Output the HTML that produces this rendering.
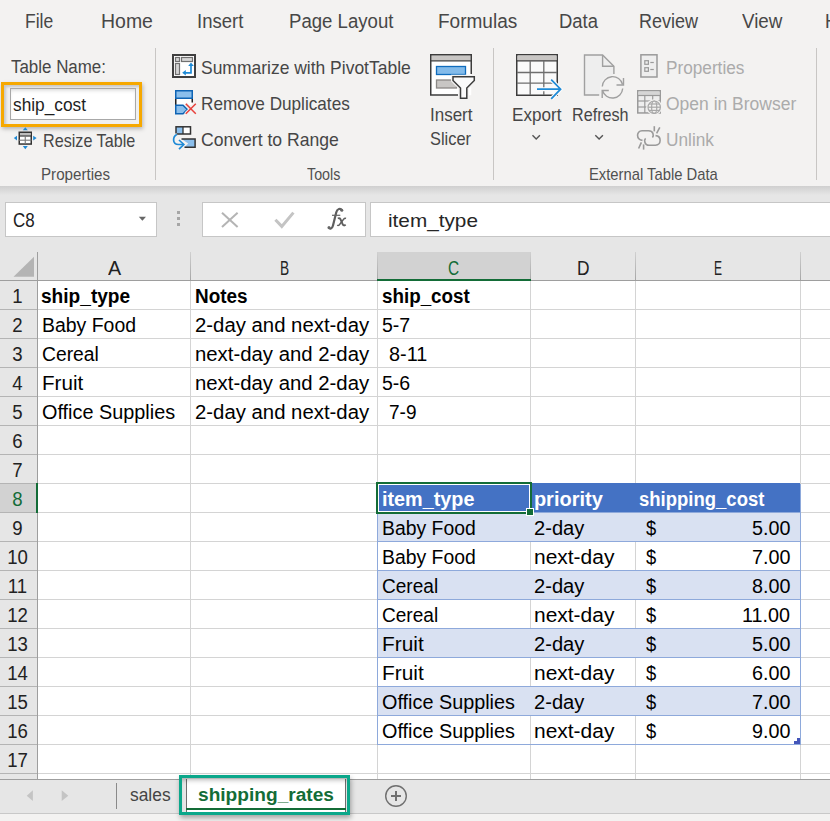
<!DOCTYPE html><html><head><meta charset="utf-8"><style>
html,body{margin:0;padding:0;width:830px;height:821px;overflow:hidden;background:#f3f2f1}
body{position:relative;font-family:"Liberation Sans",sans-serif}
.t{position:absolute;white-space:nowrap;line-height:1;transform-origin:0 0}
</style></head><body>
<div style="position:absolute;left:0px;top:0px;width:830px;height:186px;background:#f3f2f1"></div>
<div style="position:absolute;left:0px;top:186px;width:830px;height:594px;background:#e6e6e6"></div>
<div style="position:absolute;left:0px;top:186px;width:830px;height:9px;background:linear-gradient(#cfcfcf,#e6e6e6)"></div>
<div class="t" style="left:24.60px;top:11.00px;font-size:20px;color:#474747;transform:scaleX(0.8758);">File</div>
<div class="t" style="left:100.50px;top:11.00px;font-size:20px;color:#474747;transform:scaleX(0.9738);">Home</div>
<div class="t" style="left:196.70px;top:11.00px;font-size:20px;color:#474747;transform:scaleX(0.9260);">Insert</div>
<div class="t" style="left:288.60px;top:11.00px;font-size:20px;color:#474747;transform:scaleX(0.9297);">Page Layout</div>
<div class="t" style="left:437.70px;top:11.00px;font-size:20px;color:#474747;transform:scaleX(0.9508);">Formulas</div>
<div class="t" style="left:559.00px;top:11.00px;font-size:20px;color:#474747;transform:scaleX(0.9220);">Data</div>
<div class="t" style="left:639.40px;top:11.00px;font-size:20px;color:#474747;transform:scaleX(0.8994);">Review</div>
<div class="t" style="left:741.60px;top:11.00px;font-size:20px;color:#474747;transform:scaleX(0.9395);">View</div>
<div class="t" style="left:825.00px;top:11.00px;font-size:20px;color:#474747;transform:scaleX(0.9000);">H</div>
<div style="position:absolute;left:155px;top:48px;width:1px;height:132px;background:#c8c6c4"></div>
<div style="position:absolute;left:493px;top:48px;width:1px;height:132px;background:#c8c6c4"></div>
<div style="position:absolute;left:816px;top:48px;width:1px;height:132px;background:#c8c6c4"></div>
<div class="t" style="left:10.50px;top:58.00px;font-size:18.8px;color:#464646;transform:scaleX(0.9009);">Table Name:</div>
<div style="position:absolute;left:1px;top:82px;width:141px;height:45px;border:3px solid #f6a800;box-sizing:border-box;box-shadow:1px 2px 4px rgba(0,0,0,0.25)"></div>
<div style="position:absolute;left:4px;top:85px;width:135px;height:39px;background:#f0f0f0;box-shadow:inset 2px 2px 3px rgba(0,0,0,0.18)"></div>
<div style="position:absolute;left:10px;top:88px;width:126px;height:32px;background:#fff;border:1px solid #a8a8a8;box-sizing:border-box;box-shadow:inset 0 3px 4px -2px rgba(0,0,0,0.18)"></div>
<div class="t" style="left:13.00px;top:96.00px;font-size:18.5px;color:#1e1e1e;transform:scaleX(0.9340);">ship_cost</div>
<div class="t" style="left:42.80px;top:132.00px;font-size:18.6px;color:#464646;transform:scaleX(0.8689);">Resize Table</div>
<div class="t" style="left:40.90px;top:166.00px;font-size:16.2px;color:#505050;transform:scaleX(0.9368);">Properties</div>
<div class="t" style="left:200.80px;top:59.00px;font-size:18.6px;color:#464646;transform:scaleX(0.9396);">Summarize with PivotTable</div>
<div class="t" style="left:200.80px;top:95.00px;font-size:18.6px;color:#464646;transform:scaleX(0.9227);">Remove Duplicates</div>
<div class="t" style="left:200.80px;top:131.00px;font-size:18.6px;color:#464646;transform:scaleX(0.9450);">Convert to Range</div>
<div class="t" style="left:306.60px;top:166.00px;font-size:16.2px;color:#505050;transform:scaleX(0.8830);">Tools</div>
<div class="t" style="left:430.00px;top:107.00px;font-size:17.9px;color:#464646;transform:scaleX(0.9497);">Insert</div>
<div class="t" style="left:430.00px;top:131.00px;font-size:17.9px;color:#464646;transform:scaleX(0.9162);">Slicer</div>
<div class="t" style="left:512.00px;top:107.00px;font-size:17.9px;color:#464646;transform:scaleX(0.9549);">Export</div>
<div class="t" style="left:571.70px;top:107.00px;font-size:17.9px;color:#464646;transform:scaleX(0.9034);">Refresh</div>
<div class="t" style="left:665.50px;top:59.00px;font-size:18.3px;color:#ababab;transform:scaleX(0.9407);">Properties</div>
<div class="t" style="left:665.50px;top:95.00px;font-size:18.3px;color:#ababab;transform:scaleX(0.9565);">Open in Browser</div>
<div class="t" style="left:665.50px;top:131.00px;font-size:18.3px;color:#ababab;transform:scaleX(0.9438);">Unlink</div>
<div class="t" style="left:589.00px;top:166.00px;font-size:16.2px;color:#505050;transform:scaleX(0.9137);">External Table Data</div>
<div style="position:absolute;left:5px;top:202px;width:152px;height:35px;background:#fff;border:1px solid #c6c6c6;box-sizing:border-box"></div>
<div class="t" style="left:12.70px;top:211.00px;font-size:19.5px;color:#222;transform:scaleX(0.8694);">C8</div>
<div style="position:absolute;left:202px;top:202px;width:164px;height:35px;background:#fff;border:1px solid #c6c6c6;box-sizing:border-box"></div>
<div style="position:absolute;left:370px;top:202px;width:470px;height:35px;background:#fff;border:1px solid #c6c6c6;box-sizing:border-box"></div>
<div class="t" style="left:388.20px;top:212.00px;font-size:18.5px;color:#262626;transform:scaleX(1.1210);">item_type</div>

<svg style="position:absolute;left:0;top:0" width="830" height="250">
<!-- pivot -->
<rect x="173" y="55" width="22" height="22" fill="#fff" stroke="#3f3f3f" stroke-width="2"/>
<g fill="#d6d6d6" stroke="#707070" stroke-width="1.2">
<rect x="175.5" y="57.5" width="4" height="4"/><rect x="181.5" y="57.5" width="11" height="4"/><rect x="175.5" y="63.5" width="4" height="11"/>
</g>
<path d="M184.5 72.8 H191 V65" fill="none" stroke="#1e8ad6" stroke-width="1.7"/>
<polygon points="182.2,72.8 185.8,70 185.8,75.6" fill="#1e8ad6"/>
<polygon points="191,62.4 188.2,66 193.8,66" fill="#1e8ad6"/>
<!-- remove duplicates -->
<rect x="175.75" y="98.5" width="16.5" height="6.5" fill="#fff"/>
<line x1="175.75" y1="98" x2="175.75" y2="105" stroke="#222" stroke-width="1.5"/>
<line x1="192.25" y1="98" x2="192.25" y2="102.5" stroke="#222" stroke-width="1.5"/>
<rect x="175.75" y="90.75" width="16.5" height="7.5" fill="#8bbfec" stroke="#0f64b4" stroke-width="1.5"/>
<polygon points="175.75,105.25 183,105.25 187.3,109.5 183,113.75 175.75,113.75" fill="#8bbfec" stroke="#0f64b4" stroke-width="1.5"/>
<g stroke="#f3f2f1" stroke-width="3.5"><line x1="185.8" y1="103.8" x2="195.8" y2="113.8"/><line x1="195.8" y1="103.8" x2="185.8" y2="113.8"/></g>
<g stroke="#e8413c" stroke-width="1.5"><line x1="185.8" y1="103.8" x2="195.8" y2="113.8"/><line x1="195.8" y1="103.8" x2="185.8" y2="113.8"/></g>
<!-- convert to range -->
<rect x="176" y="126.8" width="7" height="7.2" fill="#8bbfec"/>
<rect x="183" y="126.8" width="7.5" height="7.2" fill="#fff"/>
<rect x="176" y="126.8" width="14.5" height="7.2" fill="none" stroke="#333" stroke-width="1.5"/>
<line x1="183" y1="126.8" x2="183" y2="134" stroke="#333" stroke-width="1.3"/>
<polygon points="181.5,138.9 195.1,138.9 195.1,147.2 184.5,147.2 188.2,143.5" fill="#8bbfec"/>
<path d="M181.5 138.9 H195.1 V147.2 H184.5" fill="none" stroke="#333" stroke-width="1.5"/>
<path d="M177 134.5 C172.5 136.5 172 144.5 178.5 144.5 H183.5" fill="none" stroke="#f3f2f1" stroke-width="3.5"/>
<path d="M177 134.5 C172.5 136.5 172 144.5 178.5 144.5 H183.5" fill="none" stroke="#1e8ad6" stroke-width="1.7"/>
<polyline points="179,140 183.8,144.5 179,149.2" fill="none" stroke="#1e8ad6" stroke-width="1.7"/>
<!-- resize table -->
<rect x="19.25" y="132.25" width="12" height="11.8" fill="#fff" stroke="#333" stroke-width="1.5"/>
<rect x="20" y="133" width="10.5" height="2.6" fill="#bdbdbd"/>
<line x1="19" y1="136" x2="31.5" y2="136" stroke="#333" stroke-width="1.2"/>
<line x1="19" y1="140.2" x2="31.5" y2="140.2" stroke="#777" stroke-width="1.1"/>
<line x1="25.25" y1="136" x2="25.25" y2="144" stroke="#777" stroke-width="1.1"/>
<g fill="#1e88d4"><polygon points="22.8,130.2 27.8,130.2 25.3,127.2"/><polygon points="17,135.7 17,140.5 13.8,138.1"/><polygon points="33.2,135.7 33.2,140.5 36.6,138.1"/><polygon points="22.8,146 27.8,146 25.3,149.2"/></g>
<!-- slicer -->
<rect x="430.75" y="54.75" width="40.5" height="40.5" fill="#fff"/>
<rect x="431.5" y="55.5" width="39" height="5" fill="#c8c6c4"/>
<path d="M458 95 H430.75 V54.75 H471.25 V74" fill="none" stroke="#3c3c3c" stroke-width="1.5"/>
<line x1="430.75" y1="60.8" x2="471.25" y2="60.8" stroke="#3c3c3c" stroke-width="1.3"/>
<rect x="436.5" y="66.5" width="29" height="8" fill="#83bbea" stroke="#0f6cbd" stroke-width="1.3"/>
<rect x="436.5" y="80" width="20" height="8" fill="#c8c6c4" stroke="#8a8886" stroke-width="1.3"/>
<polygon points="453,76.8 474.3,76.8 474.3,80.5 466.8,88 466.8,98.3 460.5,98.3 460.5,88 453,80.5" fill="#fafafa" stroke="#f3f2f1" stroke-width="4"/>
<polygon points="453,76.8 474.3,76.8 474.3,80.5 466.8,88 466.8,98.3 460.5,98.3 460.5,88 453,80.5" fill="#fafafa" stroke="#3c3c3c" stroke-width="1.5"/>
<!-- export -->
<rect x="516.75" y="54.75" width="40.5" height="40.5" fill="#fafafa" stroke="#3c3c3c" stroke-width="1.5"/>
<rect x="517.5" y="55.5" width="39" height="5" fill="#c8c6c4"/>
<line x1="516.75" y1="60.8" x2="557.25" y2="60.8" stroke="#3c3c3c" stroke-width="1.3"/>
<g stroke="#6e6e6e" stroke-width="1.3"><line x1="530.2" y1="61" x2="530.2" y2="95"/><line x1="543.8" y1="61" x2="543.8" y2="95"/><line x1="517" y1="72.5" x2="557" y2="72.5"/><line x1="517" y1="83.2" x2="557" y2="83.2"/></g>
<path d="M537 89.2 H559.5 M551.2 79.6 L560.6 89.2 L551.2 98.8" fill="none" stroke="#fafafa" stroke-width="4"/>
<path d="M537 89.2 H559.5 M551.2 79.6 L560.6 89.2 L551.2 98.8" fill="none" stroke="#1e8ad6" stroke-width="1.7"/>
<polyline points="532.5,135.2 536.2,139 539.9,135.2" fill="none" stroke="#555" stroke-width="1.4"/>
<!-- refresh -->
<path d="M599.2 95 H584.5 V55 H602.6 L613.9 66.3 V73.9" fill="#eeeeee" stroke="#a0a0a0" stroke-width="1.4"/>
<path d="M602.6 55 V66.3 H613.9" fill="none" stroke="#a0a0a0" stroke-width="1.4"/>
<circle cx="612.5" cy="87.5" r="12.5" fill="#f3f2f1"/>
<path d="M602.3 86.5 A10.3 10.3 0 0 1 622.6 84.5" fill="none" stroke="#a0a0a0" stroke-width="1.4"/>
<path d="M622.7 88.5 A10.3 10.3 0 0 1 602.5 90.5" fill="none" stroke="#a0a0a0" stroke-width="1.4"/>
<path d="M623.5 78 V85 H616.5" fill="none" stroke="#a0a0a0" stroke-width="1.4"/>
<path d="M602.2 98 V90.5 H608.8" fill="none" stroke="#a0a0a0" stroke-width="1.4"/>
<polyline points="595.3,135.2 599.1,139 602.9,135.2" fill="none" stroke="#555" stroke-width="1.4"/>
<!-- properties disabled -->
<rect x="640.9" y="54.8" width="16.1" height="22.2" fill="#eeeeee" stroke="#9a9a9a" stroke-width="1.5"/>
<g stroke="#9a9a9a" stroke-width="1.2" fill="none"><rect x="644.8" y="60.7" width="3.6" height="3.6"/><rect x="644.8" y="67.7" width="3.6" height="3.6"/><line x1="650.3" y1="62.5" x2="653.8" y2="62.5"/><line x1="650.3" y1="69.5" x2="653.8" y2="69.5"/></g>
<!-- open in browser -->
<rect x="637.75" y="90.75" width="22.5" height="22.2" fill="#eeeeee" stroke="#9a9a9a" stroke-width="1.5"/>
<rect x="638.5" y="91.5" width="21" height="3.8" fill="#d6d6d6"/>
<g stroke="#9a9a9a" stroke-width="1.2"><line x1="637.75" y1="95.5" x2="660.25" y2="95.5"/><line x1="644.8" y1="95.5" x2="644.8" y2="113"/><line x1="652.7" y1="95.5" x2="652.7" y2="113"/><line x1="637.75" y1="101" x2="660.25" y2="101"/><line x1="637.75" y1="107" x2="660.25" y2="107"/></g>
<circle cx="654.2" cy="107.2" r="8" fill="#f3f2f1"/>
<g stroke="#a8a8a8" stroke-width="1.2" fill="none"><circle cx="654.2" cy="107.2" r="6.2"/><ellipse cx="654.2" cy="107.2" rx="2.6" ry="6.2"/><line x1="648" y1="107.2" x2="660.4" y2="107.2"/><line x1="649" y1="104" x2="659.4" y2="104"/><line x1="649" y1="110.4" x2="659.4" y2="110.4"/></g>
<!-- unlink -->
<g stroke="#9a9a9a" stroke-width="1.6" fill="none">
<path d="M642.5 140.4 C636 139.5 636 130.8 642 130.8 H648.5 C653.5 130.8 654 135.5 652.4 137.4"/>
<path d="M645.6 138.3 C643.8 140 644.5 145.2 649 145.2 H655.5 C661.5 145.2 661.8 136 655.5 135.6"/>
<line x1="654.3" y1="126.2" x2="654.3" y2="131.4"/><line x1="659.8" y1="127.4" x2="656.6" y2="133.4"/><line x1="641.4" y1="142.4" x2="638.6" y2="148.5"/><line x1="643.6" y1="144.4" x2="643.6" y2="149.6"/>
</g>
<!-- formula bar -->
<polygon points="138.8,216.8 146,216.8 142.4,220.8" fill="#666"/>
<g fill="#a6a6a6"><rect x="177" y="211" width="3" height="3"/><rect x="177" y="217" width="3" height="3"/><rect x="177" y="223" width="3" height="3"/></g>
<g stroke="#b4b4b4" stroke-width="2"><line x1="222" y1="212.8" x2="237.6" y2="227"/><line x1="237.6" y1="212.8" x2="222" y2="227"/></g>
<polyline points="275.4,219.8 281.8,226.4 293.4,212.6" fill="none" stroke="#c4c4c4" stroke-width="3"/>
</svg>

<svg style="position:absolute;left:0;top:200px" width="360" height="40"><g transform="translate(0,-200)">
<path d="M342 210.2 C340.5 208 337.2 208.6 336.3 212.3 L333 225.5 C332.2 228.8 329.8 229.3 328.6 227.6" fill="none" stroke="#5e5e5e" stroke-width="2.2"/>
<circle cx="341.8" cy="210.3" r="1.5" fill="#666"/><circle cx="329" cy="227.4" r="1.5" fill="#666"/>
<line x1="332" y1="215.3" x2="340.3" y2="215.3" stroke="#666" stroke-width="1.2"/>
<path d="M337.8 218.5 C339.5 217.6 340.3 218.5 341 220.3 L342.6 224.2 C343.2 225.6 344.3 225.8 345.7 224.8" fill="none" stroke="#5e5e5e" stroke-width="1.9"/>
<path d="M346 218.5 C345 218 344.3 218.4 343.6 219.3 L339.6 224.5 C339 225.4 338 225.8 337.3 225" fill="none" stroke="#5e5e5e" stroke-width="1.4"/>
</g></svg>
<div style="position:absolute;left:38px;top:281px;width:792px;height:498px;background:#fff"></div>
<div style="position:absolute;left:378px;top:252px;width:152px;height:28px;background:#d2d2d2"></div>
<div style="position:absolute;left:0px;top:484px;width:37px;height:28px;background:#d2d2d2"></div>
<div style="position:absolute;left:38px;top:309px;width:792px;height:1px;background:#d4d4d4"></div>
<div style="position:absolute;left:0px;top:309px;width:37px;height:1px;background:#b4b4b4"></div>
<div style="position:absolute;left:38px;top:338px;width:792px;height:1px;background:#d4d4d4"></div>
<div style="position:absolute;left:0px;top:338px;width:37px;height:1px;background:#b4b4b4"></div>
<div style="position:absolute;left:38px;top:367px;width:792px;height:1px;background:#d4d4d4"></div>
<div style="position:absolute;left:0px;top:367px;width:37px;height:1px;background:#b4b4b4"></div>
<div style="position:absolute;left:38px;top:396px;width:792px;height:1px;background:#d4d4d4"></div>
<div style="position:absolute;left:0px;top:396px;width:37px;height:1px;background:#b4b4b4"></div>
<div style="position:absolute;left:38px;top:425px;width:792px;height:1px;background:#d4d4d4"></div>
<div style="position:absolute;left:0px;top:425px;width:37px;height:1px;background:#b4b4b4"></div>
<div style="position:absolute;left:38px;top:454px;width:792px;height:1px;background:#d4d4d4"></div>
<div style="position:absolute;left:0px;top:454px;width:37px;height:1px;background:#b4b4b4"></div>
<div style="position:absolute;left:38px;top:483px;width:792px;height:1px;background:#d4d4d4"></div>
<div style="position:absolute;left:0px;top:483px;width:37px;height:1px;background:#b4b4b4"></div>
<div style="position:absolute;left:38px;top:512px;width:792px;height:1px;background:#d4d4d4"></div>
<div style="position:absolute;left:0px;top:512px;width:37px;height:1px;background:#b4b4b4"></div>
<div style="position:absolute;left:38px;top:541px;width:792px;height:1px;background:#d4d4d4"></div>
<div style="position:absolute;left:0px;top:541px;width:37px;height:1px;background:#b4b4b4"></div>
<div style="position:absolute;left:38px;top:570px;width:792px;height:1px;background:#d4d4d4"></div>
<div style="position:absolute;left:0px;top:570px;width:37px;height:1px;background:#b4b4b4"></div>
<div style="position:absolute;left:38px;top:599px;width:792px;height:1px;background:#d4d4d4"></div>
<div style="position:absolute;left:0px;top:599px;width:37px;height:1px;background:#b4b4b4"></div>
<div style="position:absolute;left:38px;top:628px;width:792px;height:1px;background:#d4d4d4"></div>
<div style="position:absolute;left:0px;top:628px;width:37px;height:1px;background:#b4b4b4"></div>
<div style="position:absolute;left:38px;top:657px;width:792px;height:1px;background:#d4d4d4"></div>
<div style="position:absolute;left:0px;top:657px;width:37px;height:1px;background:#b4b4b4"></div>
<div style="position:absolute;left:38px;top:686px;width:792px;height:1px;background:#d4d4d4"></div>
<div style="position:absolute;left:0px;top:686px;width:37px;height:1px;background:#b4b4b4"></div>
<div style="position:absolute;left:38px;top:715px;width:792px;height:1px;background:#d4d4d4"></div>
<div style="position:absolute;left:0px;top:715px;width:37px;height:1px;background:#b4b4b4"></div>
<div style="position:absolute;left:38px;top:744px;width:792px;height:1px;background:#d4d4d4"></div>
<div style="position:absolute;left:0px;top:744px;width:37px;height:1px;background:#b4b4b4"></div>
<div style="position:absolute;left:38px;top:773px;width:792px;height:1px;background:#d4d4d4"></div>
<div style="position:absolute;left:0px;top:773px;width:37px;height:1px;background:#b4b4b4"></div>
<div style="position:absolute;left:190px;top:281px;width:1px;height:498px;background:#d4d4d4"></div>
<div style="position:absolute;left:190px;top:252px;width:1px;height:28px;background:linear-gradient(#d0d0d0,#a6a6a6)"></div>
<div style="position:absolute;left:377px;top:281px;width:1px;height:498px;background:#d4d4d4"></div>
<div style="position:absolute;left:377px;top:252px;width:1px;height:28px;background:linear-gradient(#d0d0d0,#a6a6a6)"></div>
<div style="position:absolute;left:530px;top:281px;width:1px;height:498px;background:#d4d4d4"></div>
<div style="position:absolute;left:530px;top:252px;width:1px;height:28px;background:linear-gradient(#d0d0d0,#a6a6a6)"></div>
<div style="position:absolute;left:635px;top:281px;width:1px;height:498px;background:#d4d4d4"></div>
<div style="position:absolute;left:635px;top:252px;width:1px;height:28px;background:linear-gradient(#d0d0d0,#a6a6a6)"></div>
<div style="position:absolute;left:800px;top:281px;width:1px;height:498px;background:#d4d4d4"></div>
<div style="position:absolute;left:800px;top:252px;width:1px;height:28px;background:linear-gradient(#d0d0d0,#a6a6a6)"></div>
<div style="position:absolute;left:37px;top:252px;width:1px;height:527px;background:#9e9e9e"></div>
<div style="position:absolute;left:0px;top:280px;width:830px;height:1px;background:#9e9e9e"></div>
<div style="position:absolute;left:377px;top:279px;width:154px;height:2px;background:#136c37"></div>
<div style="position:absolute;left:36px;top:483px;width:2px;height:30px;background:#136c37"></div>
<div style="position:absolute;left:0px;top:779px;width:830px;height:1px;background:#9e9e9e"></div>
<svg style="position:absolute;left:0;top:250px" width="37" height="30"><polygon points="13.5,26.8 34,26.8 34,6.7" fill="#b4b4b4"/></svg>
<div class="t" style="left:107.90px;top:258.00px;font-size:20px;color:#222;transform:scaleX(0.9851);">A</div>
<div class="t" style="left:280.10px;top:258.00px;font-size:20px;color:#222;transform:scaleX(0.6842);">B</div>
<div class="t" style="left:448.40px;top:258.00px;font-size:20px;color:#136c37;transform:scaleX(0.7708);">C</div>
<div class="t" style="left:577.00px;top:258.00px;font-size:20px;color:#222;transform:scaleX(0.8681);">D</div>
<div class="t" style="left:714.10px;top:258.00px;font-size:20px;color:#222;transform:scaleX(0.6015);">E</div>
<div class="t" style="left:-0.7px;width:37px;text-align:center;top:285.77px;font-size:20px;color:#222;transform:scaleX(0.93);transform-origin:18.5px 0">1</div>
<div class="t" style="left:-0.7px;width:37px;text-align:center;top:314.77px;font-size:20px;color:#222;transform:scaleX(0.93);transform-origin:18.5px 0">2</div>
<div class="t" style="left:-0.7px;width:37px;text-align:center;top:343.77px;font-size:20px;color:#222;transform:scaleX(0.93);transform-origin:18.5px 0">3</div>
<div class="t" style="left:-0.7px;width:37px;text-align:center;top:372.77px;font-size:20px;color:#222;transform:scaleX(0.93);transform-origin:18.5px 0">4</div>
<div class="t" style="left:-0.7px;width:37px;text-align:center;top:401.77px;font-size:20px;color:#222;transform:scaleX(0.93);transform-origin:18.5px 0">5</div>
<div class="t" style="left:-0.7px;width:37px;text-align:center;top:430.77px;font-size:20px;color:#222;transform:scaleX(0.93);transform-origin:18.5px 0">6</div>
<div class="t" style="left:-0.7px;width:37px;text-align:center;top:459.77px;font-size:20px;color:#222;transform:scaleX(0.93);transform-origin:18.5px 0">7</div>
<div class="t" style="left:-0.7px;width:37px;text-align:center;top:488.77px;font-size:20px;color:#136c37;transform:scaleX(0.93);transform-origin:18.5px 0">8</div>
<div class="t" style="left:-0.7px;width:37px;text-align:center;top:517.77px;font-size:20px;color:#222;transform:scaleX(0.93);transform-origin:18.5px 0">9</div>
<div class="t" style="left:-0.7px;width:37px;text-align:center;top:546.77px;font-size:20px;color:#222;transform:scaleX(0.93);transform-origin:18.5px 0">10</div>
<div class="t" style="left:-0.7px;width:37px;text-align:center;top:575.77px;font-size:20px;color:#222;transform:scaleX(0.93);transform-origin:18.5px 0">11</div>
<div class="t" style="left:-0.7px;width:37px;text-align:center;top:604.77px;font-size:20px;color:#222;transform:scaleX(0.93);transform-origin:18.5px 0">12</div>
<div class="t" style="left:-0.7px;width:37px;text-align:center;top:633.77px;font-size:20px;color:#222;transform:scaleX(0.93);transform-origin:18.5px 0">13</div>
<div class="t" style="left:-0.7px;width:37px;text-align:center;top:662.77px;font-size:20px;color:#222;transform:scaleX(0.93);transform-origin:18.5px 0">14</div>
<div class="t" style="left:-0.7px;width:37px;text-align:center;top:691.77px;font-size:20px;color:#222;transform:scaleX(0.93);transform-origin:18.5px 0">15</div>
<div class="t" style="left:-0.7px;width:37px;text-align:center;top:720.77px;font-size:20px;color:#222;transform:scaleX(0.93);transform-origin:18.5px 0">16</div>
<div class="t" style="left:-0.7px;width:37px;text-align:center;top:749.77px;font-size:20px;color:#222;transform:scaleX(0.93);transform-origin:18.5px 0">17</div>
<div style="position:absolute;left:378px;top:483px;width:422px;height:29px;background:#4472c4"></div>
<div style="position:absolute;left:378px;top:513px;width:422px;height:28px;background:#d9e1f2"></div>
<div style="position:absolute;left:378px;top:571px;width:422px;height:28px;background:#d9e1f2"></div>
<div style="position:absolute;left:378px;top:629px;width:422px;height:28px;background:#d9e1f2"></div>
<div style="position:absolute;left:378px;top:687px;width:422px;height:28px;background:#d9e1f2"></div>
<div style="position:absolute;left:377px;top:512px;width:424px;height:1px;background:#8ea9db"></div>
<div style="position:absolute;left:377px;top:541px;width:424px;height:1px;background:#8ea9db"></div>
<div style="position:absolute;left:377px;top:570px;width:424px;height:1px;background:#8ea9db"></div>
<div style="position:absolute;left:377px;top:599px;width:424px;height:1px;background:#8ea9db"></div>
<div style="position:absolute;left:377px;top:628px;width:424px;height:1px;background:#8ea9db"></div>
<div style="position:absolute;left:377px;top:657px;width:424px;height:1px;background:#8ea9db"></div>
<div style="position:absolute;left:377px;top:686px;width:424px;height:1px;background:#8ea9db"></div>
<div style="position:absolute;left:377px;top:715px;width:424px;height:1px;background:#8ea9db"></div>
<div style="position:absolute;left:377px;top:744px;width:424px;height:1px;background:#8ea9db"></div>
<div style="position:absolute;left:377px;top:512px;width:1px;height:233px;background:#8ea9db"></div>
<div style="position:absolute;left:800px;top:484px;width:1px;height:261px;background:#8ea9db"></div>
<div style="position:absolute;left:797px;top:738px;width:3px;height:6px;background:#4355b9"></div>
<div style="position:absolute;left:794px;top:741px;width:6px;height:3px;background:#4355b9"></div>
<div style="position:absolute;left:376px;top:482px;width:156px;height:32px;border:2px solid #136c37;box-sizing:border-box"></div>
<div style="position:absolute;left:378px;top:484px;width:152px;height:28px;border:1px solid #fff;box-sizing:border-box"></div>
<div style="position:absolute;left:526px;top:508px;width:8px;height:8px;background:#fff"></div>
<div style="position:absolute;left:527px;top:509px;width:6px;height:6px;background:#136c37"></div>
<div class="t" style="left:41.30px;top:286.00px;font-size:20px;color:#000;font-weight:bold;transform:scaleX(0.9550);">ship_type</div>
<div class="t" style="left:194.90px;top:286.00px;font-size:20px;color:#000;font-weight:bold;transform:scaleX(0.9460);">Notes</div>
<div class="t" style="left:381.60px;top:286.00px;font-size:20px;color:#000;font-weight:bold;transform:scaleX(0.9400);">ship_cost</div>
<div class="t" style="left:41.60px;top:315.00px;font-size:20px;color:#000;transform:scaleX(0.9721);">Baby Food</div>
<div class="t" style="left:194.90px;top:315.00px;font-size:20px;color:#000;transform:scaleX(1.0169);">2-day and next-day</div>
<div class="t" style="left:381.60px;top:315.00px;font-size:20px;color:#000;transform:scaleX(0.9758);">5-7</div>
<div class="t" style="left:41.60px;top:344.00px;font-size:20px;color:#000;transform:scaleX(0.9643);">Cereal</div>
<div class="t" style="left:194.90px;top:344.00px;font-size:20px;color:#000;transform:scaleX(1.0169);">next-day and 2-day</div>
<div class="t" style="left:388.50px;top:344.00px;font-size:20px;color:#000;transform:scaleX(0.9922);">8-11</div>
<div class="t" style="left:41.60px;top:373.00px;font-size:20px;color:#000;transform:scaleX(1.0300);">Fruit</div>
<div class="t" style="left:194.90px;top:373.00px;font-size:20px;color:#000;transform:scaleX(1.0169);">next-day and 2-day</div>
<div class="t" style="left:381.60px;top:373.00px;font-size:20px;color:#000;transform:scaleX(0.9758);">5-6</div>
<div class="t" style="left:41.60px;top:402.00px;font-size:20px;color:#000;transform:scaleX(0.9925);">Office Supplies</div>
<div class="t" style="left:194.90px;top:402.00px;font-size:20px;color:#000;transform:scaleX(1.0169);">2-day and next-day</div>
<div class="t" style="left:388.50px;top:402.00px;font-size:20px;color:#000;transform:scaleX(0.9516);">7-9</div>
<div class="t" style="left:381.80px;top:489.00px;font-size:20px;color:#fff;font-weight:bold;transform:scaleX(0.9904);">item_type</div>
<div class="t" style="left:533.90px;top:489.00px;font-size:20px;color:#fff;font-weight:bold;">priority</div>
<div class="t" style="left:639.10px;top:489.00px;font-size:20px;color:#fff;font-weight:bold;transform:scaleX(0.9248);">shipping_cost</div>
<div class="t" style="left:381.80px;top:518.00px;font-size:20px;color:#000;transform:scaleX(0.9690);">Baby Food</div>
<div class="t" style="left:533.90px;top:518.00px;font-size:20px;color:#000;transform:scaleX(1.0060);">2-day</div>
<div class="t" style="left:646.30px;top:518.00px;font-size:20px;color:#000;transform:scaleX(0.9189);">$</div>
<div class="t" style="left:751.60px;top:518.00px;font-size:20px;color:#000;transform:scaleX(0.9871);">5.00</div>
<div class="t" style="left:381.80px;top:547.00px;font-size:20px;color:#000;transform:scaleX(0.9690);">Baby Food</div>
<div class="t" style="left:533.90px;top:547.00px;font-size:20px;color:#000;transform:scaleX(1.0482);">next-day</div>
<div class="t" style="left:646.30px;top:547.00px;font-size:20px;color:#000;transform:scaleX(0.9189);">$</div>
<div class="t" style="left:751.60px;top:547.00px;font-size:20px;color:#000;transform:scaleX(0.9871);">7.00</div>
<div class="t" style="left:381.80px;top:576.00px;font-size:20px;color:#000;transform:scaleX(0.9525);">Cereal</div>
<div class="t" style="left:533.90px;top:576.00px;font-size:20px;color:#000;transform:scaleX(1.0060);">2-day</div>
<div class="t" style="left:646.30px;top:576.00px;font-size:20px;color:#000;transform:scaleX(0.9189);">$</div>
<div class="t" style="left:751.60px;top:576.00px;font-size:20px;color:#000;transform:scaleX(0.9871);">8.00</div>
<div class="t" style="left:381.80px;top:605.00px;font-size:20px;color:#000;transform:scaleX(0.9525);">Cereal</div>
<div class="t" style="left:533.90px;top:605.00px;font-size:20px;color:#000;transform:scaleX(1.0482);">next-day</div>
<div class="t" style="left:646.30px;top:605.00px;font-size:20px;color:#000;transform:scaleX(0.9189);">$</div>
<div class="t" style="left:742.02px;top:605.00px;font-size:20px;color:#000;transform:scaleX(0.9871);">11.00</div>
<div class="t" style="left:381.80px;top:634.00px;font-size:20px;color:#000;transform:scaleX(1.0425);">Fruit</div>
<div class="t" style="left:533.90px;top:634.00px;font-size:20px;color:#000;transform:scaleX(1.0060);">2-day</div>
<div class="t" style="left:646.30px;top:634.00px;font-size:20px;color:#000;transform:scaleX(0.9189);">$</div>
<div class="t" style="left:751.60px;top:634.00px;font-size:20px;color:#000;transform:scaleX(0.9871);">5.00</div>
<div class="t" style="left:381.80px;top:663.00px;font-size:20px;color:#000;transform:scaleX(1.0425);">Fruit</div>
<div class="t" style="left:533.90px;top:663.00px;font-size:20px;color:#000;transform:scaleX(1.0482);">next-day</div>
<div class="t" style="left:646.30px;top:663.00px;font-size:20px;color:#000;transform:scaleX(0.9189);">$</div>
<div class="t" style="left:751.60px;top:663.00px;font-size:20px;color:#000;transform:scaleX(0.9871);">6.00</div>
<div class="t" style="left:381.80px;top:692.00px;font-size:20px;color:#000;transform:scaleX(0.9911);">Office Supplies</div>
<div class="t" style="left:533.90px;top:692.00px;font-size:20px;color:#000;transform:scaleX(1.0060);">2-day</div>
<div class="t" style="left:646.30px;top:692.00px;font-size:20px;color:#000;transform:scaleX(0.9189);">$</div>
<div class="t" style="left:751.60px;top:692.00px;font-size:20px;color:#000;transform:scaleX(0.9871);">7.00</div>
<div class="t" style="left:381.80px;top:721.00px;font-size:20px;color:#000;transform:scaleX(0.9911);">Office Supplies</div>
<div class="t" style="left:533.90px;top:721.00px;font-size:20px;color:#000;transform:scaleX(1.0482);">next-day</div>
<div class="t" style="left:646.30px;top:721.00px;font-size:20px;color:#000;transform:scaleX(0.9189);">$</div>
<div class="t" style="left:751.60px;top:721.00px;font-size:20px;color:#000;transform:scaleX(0.9871);">9.00</div>
<div style="position:absolute;left:0px;top:780px;width:830px;height:33px;background:#e6e6e6"></div>
<div style="position:absolute;left:0px;top:813px;width:830px;height:1px;background:#c8c8c8"></div>
<div style="position:absolute;left:0px;top:814px;width:830px;height:7px;background:#f3f2f1"></div>
<svg style="position:absolute;left:0;top:780px" width="130" height="34"><polygon points="26.7,15.7 32.9,10.3 32.9,21" fill="#c4c4c4"/><polygon points="68.3,15.7 61.7,10.3 61.7,21" fill="#c4c4c4"/><rect x="116" y="3" width="1" height="26" fill="#8a8a8a"/></svg>
<div class="t" style="left:130.00px;top:787.00px;font-size:17.5px;color:#444;transform:scaleX(0.9936);">sales</div>
<div style="position:absolute;left:179px;top:775px;width:171px;height:40px;border:3px solid #0ba78a;box-sizing:border-box;box-shadow:1px 3px 5px rgba(0,0,0,0.32)"></div>
<div style="position:absolute;left:182px;top:778px;width:165px;height:34px;background:#e6e6e6"></div>
<div style="position:absolute;left:186px;top:779px;width:160px;height:33px;background:#fff;border-left:1px solid #6e6e6e;border-right:1px solid #6e6e6e;box-sizing:border-box"></div>
<div style="position:absolute;left:182px;top:778px;width:165px;height:34px;box-shadow:inset 0 5px 5px -3px rgba(0,0,0,0.28)"></div>
<div style="position:absolute;left:186px;top:808px;width:160px;height:2px;background:#136c37"></div>
<div class="t" style="left:197.60px;top:786.00px;font-size:18px;color:#136c37;font-weight:bold;transform:scaleX(1.0619);">shipping_rates</div>
<svg style="position:absolute;left:380px;top:780px" width="32" height="32"><circle cx="16" cy="16" r="10.3" fill="none" stroke="#707070" stroke-width="1.4"/><rect x="11" y="15" width="10" height="2" fill="#707070"/><rect x="15" y="11" width="2" height="10" fill="#707070"/></svg>
</body></html>
